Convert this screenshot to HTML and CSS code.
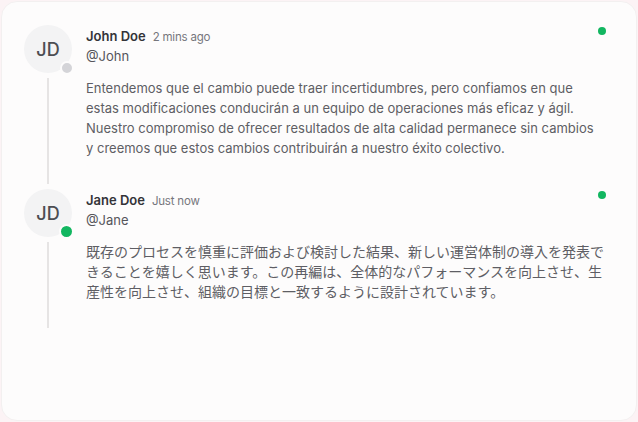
FILE: index.html
```html
<!DOCTYPE html>
<html lang="es">
<head>
<meta charset="utf-8">
<link rel="stylesheet" href="styles.css">
</head>
<body>
<div class="card">
  <div class="item">
    <div class="side">
      <div class="avatar">JD<span class="status status-off"></span></div>
      <div class="thread"></div>
    </div>
    <div class="content">
      <div class="head"><span class="name">John Doe</span><span class="time">2 mins ago</span></div>
      <div class="handle">@John</div>
      <p class="text">Entendemos que el cambio puede traer incertidumbres, pero confiamos en que estas modificaciones conducirán a un equipo de operaciones más eficaz y ágil. Nuestro compromiso de ofrecer resultados de alta calidad permanece sin cambios y creemos que estos cambios contribuirán a nuestro éxito colectivo.</p>
    </div>
    <span class="unread"></span>
  </div>
  <div class="item">
    <div class="side">
      <div class="avatar">JD<span class="status status-on"></span></div>
      <div class="thread"></div>
    </div>
    <div class="content">
      <div class="head"><span class="name">Jane Doe</span><span class="time">Just now</span></div>
      <div class="handle">@Jane</div>
      <p class="text" lang="ja">既存のプロセスを慎重に評価および検討した結果、新しい運営体制の導入を発表できることを嬉しく思います。この再編は、全体的なパフォーマンスを向上させ、生産性を向上させ、組織の目標と一致するように設計されています。</p>
    </div>
    <span class="unread"></span>
  </div>
</div>
</body>
</html>
```
FILE: styles.css
```css
html, body { margin: 0; padding: 0; }
body {
  background: #fcf3f5;
  font-family: Inter, "Noto Sans CJK JP", sans-serif;
  width: 638px;
  height: 422px;
  overflow: hidden;
}
.card {
  box-sizing: border-box;
  margin: 1px;
  width: 636px;
  height: 420px;
  border: 1px solid #f3f0f0;
  border-radius: 16px;
  background: #fdfcfc;
  padding: 23px 22px;
  display: flex;
  flex-direction: column;
  gap: 5px;
}
.item {
  position: relative;
  display: flex;
  gap: 14px;
}
.side {
  width: 48px;
  display: flex;
  flex-direction: column;
  align-items: center;
  gap: 5px;
}
.avatar {
  position: relative;
  width: 48px;
  height: 48px;
  border-radius: 50%;
  background: #f3f3f4;
  color: #4d4d52;
  font-size: 18px;
  font-weight: 500;
  display: flex;
  align-items: center;
  justify-content: center;
  flex: none;
}
.status {
  position: absolute;
  right: -2px;
  bottom: -2px;
  width: 10px;
  height: 10px;
  border-radius: 50%;
  border: 2px solid #fdfcfc;
}
.status-off { background: #d4d4d8; }
.status-on { background: #12b660; width: 11px; height: 11px; }
.thread {
  flex: 1;
  width: 2px;
  background: #e6e4e4;
}
.content {
  flex: 1;
  padding: 1px 10px 26px 0;
}
.head {
  display: flex;
  align-items: baseline;
  gap: 7px;
  height: 20px;
  line-height: 20px;
  overflow: hidden;
}
.name {
  font-size: 13px;
  font-weight: 600;
  color: #333338;
}
.time {
  font-size: 11.5px;
  line-height: 18px;
  color: #76767c;
  letter-spacing: -0.2px;
}
.handle {
  font-size: 13px;
  line-height: 20px;
  color: #55555b;
}
.text {
  margin: 12px 0 0;
  font-size: 13px;
  line-height: 20px;
  color: #5e5e64;
}
.text:lang(ja) { font-size: 14px; }
.unread {
  position: absolute;
  top: 2px;
  right: 8px;
  width: 8px;
  height: 8px;
  border-radius: 50%;
  background: #12b660;
}
```
